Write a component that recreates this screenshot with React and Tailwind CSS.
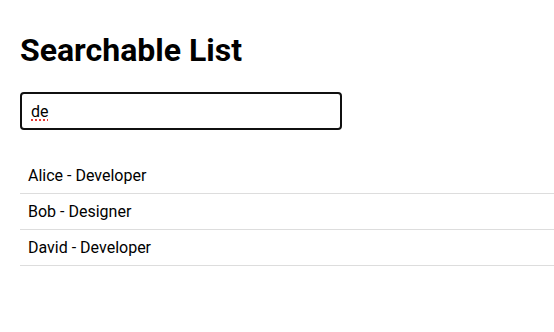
import { useState } from 'react';

const people = [
    { name: 'Alice', role: 'Developer' },
    { name: 'Bob', role: 'Designer' },
    { name: 'Charlie', role: 'Manager' },
    { name: 'David', role: 'Developer' },
];

export default function App() {
    const [query, setQuery] = useState('de');

    const filtered = people.filter((p) =>
        `${p.name} ${p.role}`.toLowerCase().includes(query.toLowerCase())
    );

    return (
        <div className="min-h-screen bg-white pl-5 pt-5 text-black font-['Roboto',sans-serif]">
            <h1 className="mt-[12px] mb-[23px] text-[32px] leading-[37px] font-bold">Searchable List</h1>

            <div className="relative w-[322px]">
                <input
                    type="text"
                    value={query}
                    spellCheck={false}
                    onChange={(e) => setQuery(e.target.value)}
                    className="block w-[322px] h-[38px] px-[9px] text-base border-2 border-[#101010] rounded-[4px] outline-none"
                />
                {/* spellcheck squiggle */}
                <span className="pointer-events-none absolute left-[11px] top-[9px] text-base leading-[19px] text-transparent underline decoration-dotted decoration-[#e53935] decoration-2 underline-offset-[3px]">
                    {query}
                </span>
            </div>

            <ul className="mt-[28px]">
                {filtered.map((p) => (
                    <li key={p.name} className="px-2 h-9 flex items-center border-b border-[#dddddd] text-base">
                        {p.name} - {p.role}
                    </li>
                ))}
            </ul>
        </div>
    );
}
